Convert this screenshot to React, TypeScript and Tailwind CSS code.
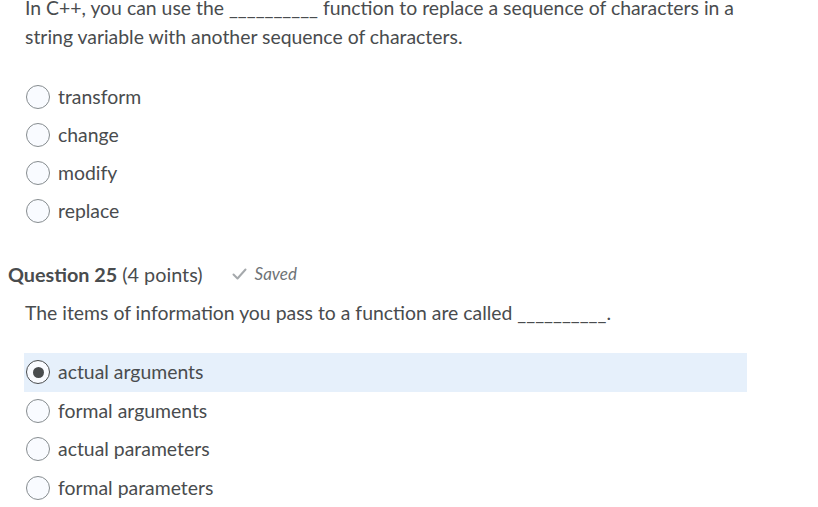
import React from "react";

type Opt = { label: string; selected?: boolean };

function Radio({ selected }: { selected?: boolean }) {
  return (
    <span
      className={
        "flex h-[24px] w-[24px] shrink-0 items-center justify-center rounded-full border bg-[#f9fbff] " +
        (selected ? "border-[#494c4e]" : "border-[#868c8f]")
      }
    >
      {selected ? <span className="block h-[11px] w-[11px] rounded-full bg-[#494c4e]" /> : null}
    </span>
  );
}

function Options({ opts, rowH }: { opts: Opt[]; rowH: string }) {
  return (
    <ul className="w-[723px]">
      {opts.map((o) => (
        <li
          key={o.label}
          className={
            "flex items-center gap-[8px] pl-[2px] " + rowH + " " + (o.selected ? "bg-[#e6f0fb]" : "")
          }
        >
          <Radio selected={o.selected} />
          <span className="leading-[28px]">{o.label}</span>
        </li>
      ))}
    </ul>
  );
}

export default function App() {
  return (
    <div
      className="h-[507px] w-[818px] overflow-hidden bg-white text-[19.4px] text-[#494c4e]"
      style={{ fontFamily: "Lato, 'Noto Sans', sans-serif" }}
    >
      <div className="-mt-[7px] pl-[25px]">
        <p className="w-[722px] leading-[29px]">
          In C++, you can use the __________ function to replace a sequence of characters in a string variable with
          another sequence of characters.
        </p>
      </div>
      <div className="mt-[27px] pl-[24px]">
        <Options
          rowH="h-[38px]"
          opts={[{ label: "transform" }, { label: "change" }, { label: "modify" }, { label: "replace" }]}
        />
      </div>
      <div className="mt-[30px] flex items-center pl-[8px] text-[19.8px] leading-[28px]">
        <span className="font-bold">Question 25</span>
        <span className="ml-[5px]">(4 points)</span>
        <span className="ml-[29px] flex items-center gap-[8px] text-[17px] italic text-[#6e7376]">
          <svg width="15" height="12" viewBox="0 0 15 12" fill="none">
            <path d="M1.5 6.5 L5.5 10.5 L13.5 1.5" stroke="#a5a9ac" strokeWidth="2" strokeLinecap="round" strokeLinejoin="round" />
          </svg>
          Saved
        </span>
      </div>
      <p className="mt-[11px] pl-[25px] leading-[28px]">
        The items of information you pass to a function are called __________.
      </p>
      <div className="mt-[26px] pl-[24px]">
        <Options
          rowH="h-[38.5px]"
          opts={[
            { label: "actual arguments", selected: true },
            { label: "formal arguments" },
            { label: "actual parameters" },
            { label: "formal parameters" },
          ]}
        />
      </div>
    </div>
  );
}
